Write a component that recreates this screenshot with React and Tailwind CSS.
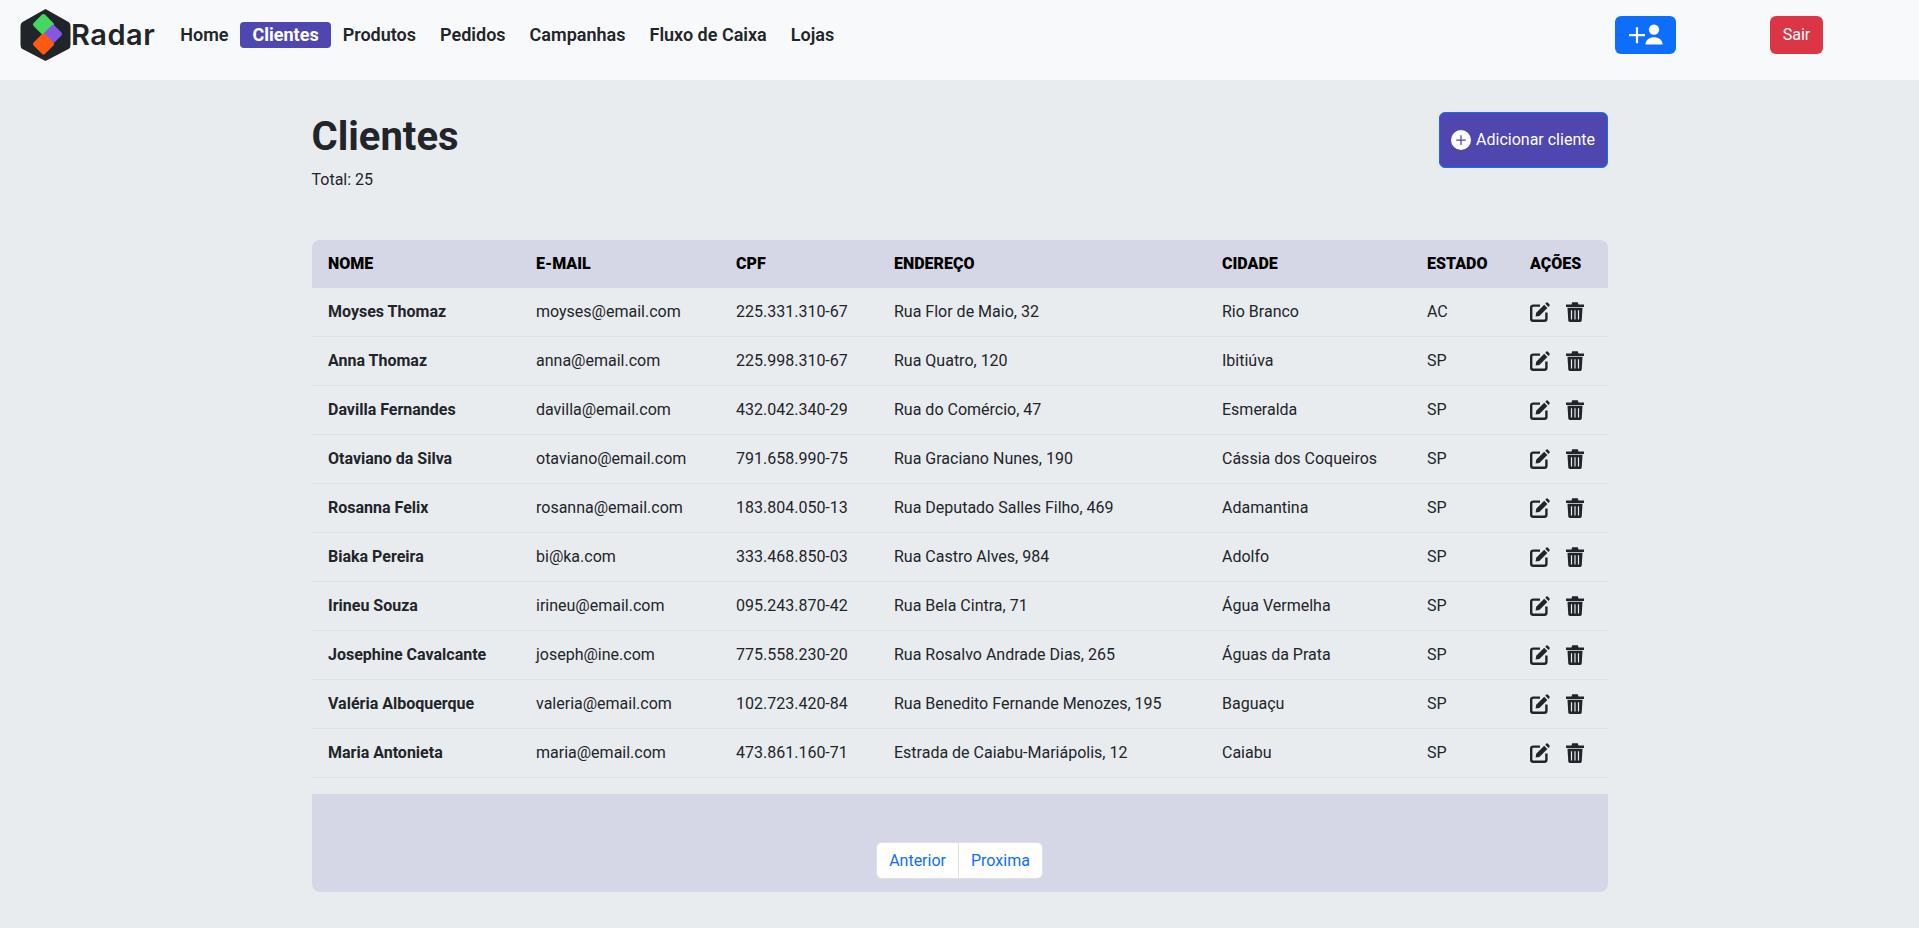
import React from "react";
import { BsPlusCircleFill } from "react-icons/bs";

const links = ["Home", "Clientes", "Produtos", "Pedidos", "Campanhas", "Fluxo de Caixa", "Lojas"];

const columns = ["Nome", "E-mail", "CPF", "Endereço", "Cidade", "Estado", "Ações"];

const clients = [
  ["Moyses Thomaz", "moyses@email.com", "225.331.310-67", "Rua Flor de Maio, 32", "Rio Branco", "AC"],
  ["Anna Thomaz", "anna@email.com", "225.998.310-67", "Rua Quatro, 120", "Ibitiúva", "SP"],
  ["Davilla Fernandes", "davilla@email.com", "432.042.340-29", "Rua do Comércio, 47", "Esmeralda", "SP"],
  ["Otaviano da Silva", "otaviano@email.com", "791.658.990-75", "Rua Graciano Nunes, 190", "Cássia dos Coqueiros", "SP"],
  ["Rosanna Felix", "rosanna@email.com", "183.804.050-13", "Rua Deputado Salles Filho, 469", "Adamantina", "SP"],
  ["Biaka Pereira", "bi@ka.com", "333.468.850-03", "Rua Castro Alves, 984", "Adolfo", "SP"],
  ["Irineu Souza", "irineu@email.com", "095.243.870-42", "Rua Bela Cintra, 71", "Água Vermelha", "SP"],
  ["Josephine Cavalcante", "joseph@ine.com", "775.558.230-20", "Rua Rosalvo Andrade Dias, 265", "Águas da Prata", "SP"],
  ["Valéria Alboquerque", "valeria@email.com", "102.723.420-84", "Rua Benedito Fernande Menozes, 195", "Baguaçu", "SP"],
  ["Maria Antonieta", "maria@email.com", "473.861.160-71", "Estrada de Caiabu-Mariápolis, 12", "Caiabu", "SP"],
];

// Hexagon logo with the three rounded squares
function Logo() {
  return (
    <svg viewBox="0 0 50 54" className="h-[54px] w-[51px] shrink-0">
      <path d="M25 1 L48 14 Q50 15 50 18 L50 37 Q50 40 48 41 L25 53 L2 41 Q0 40 0 37 L0 18 Q0 15 2 14 Z" fill="#212529" />
      <rect x="15" y="8.5" width="16" height="16" rx="2" fill="#44d860" transform="rotate(45 23 16.5)" />
      <rect x="25.5" y="19" width="14" height="14" rx="2" fill="#8458e0" transform="rotate(45 32.5 26)" />
      <rect x="15" y="28" width="16" height="16" rx="2" fill="#ff5a12" transform="rotate(45 23 36)" />
    </svg>
  );
}

function PersonAdd() {
  return (
    <svg viewBox="0 0 36 24" className="h-6 w-9" fill="white">
      <path d="M1 12.2H17M9 4.2V20.2" stroke="white" strokeWidth="2.2" fill="none" />
      <circle cx="26" cy="6.6" r="5.2" />
      <path d="M17.5 21.5 C17.5 16.5 22 14.2 26 14.2 C30 14.2 34.6 16.5 34.6 21.5 Z" />
    </svg>
  );
}

function EditIcon() {
  return (
    <svg viewBox="0 0 20 20" className="h-5 w-5 shrink-0" fill="#212529">
      <path d="M10 3.6H3.2Q1.2 3.6 1.2 5.6V16.8Q1.2 18.8 3.2 18.8H14.4Q16.4 18.8 16.4 16.8V10.5" fill="none" stroke="#212529" strokeWidth="2.4" />
      <path d="M6.2 10.8 L14.2 2.8 L17.4 6 L9.4 14 L5.6 14.6 Z" />
      <path d="M15.3 1.7 L16.4 0.6 Q17 0 17.7 0.6 L19.6 2.5 Q20 3.2 19.5 3.8 L18.5 4.9 Z" />
    </svg>
  );
}

function TrashIcon() {
  return (
    <svg viewBox="0 0 18 20" className="h-5 w-[18px] shrink-0">
      <path d="M0 2.6H18V5H0Z M5.5 2.6 L6.2 0.2 H11.8 L12.5 2.6Z" fill="#212529" />
      <path d="M1.5 5.8 L2.3 18.6 Q2.4 20 3.8 20 H14.2 Q15.6 20 15.7 18.6 L16.5 5.8 Z" fill="#212529" />
      <path d="M5.5 8.2V17.6M9 8.2V17.6M12.5 8.2V17.6" stroke="#e9ecef" strokeWidth="1.2" />
    </svg>
  );
}

export default function App() {
  return (
    <div className="min-h-[928px] bg-[#e9ecef] font-['Roboto',sans-serif] text-[#212529]">
      {/* Top bar */}
      <nav className="flex h-20 items-center bg-[#f8f9fa] pb-[10px] pl-5">
        <Logo />
        <span className="font-['Inter',sans-serif] text-[29px] font-semibold tracking-[0.5px]">Radar</span>
        <ul className="ml-[13px] flex items-center">
          {links.map((link) =>
            link === "Clientes" ? (
              <li key={link} className="rounded bg-[#4f46b0] px-3 text-lg leading-[26px] font-bold text-white">
                {link}
              </li>
            ) : (
              <li key={link} className="px-3 text-lg leading-[26px] font-semibold">
                {link}
              </li>
            )
          )}
        </ul>
        <button className="ml-auto flex h-[38px] w-[61px] items-center justify-center rounded-md bg-[#0d6efd]">
          <PersonAdd />
        </button>
        <button className="mr-[96px] ml-[94px] h-[38px] w-[53px] rounded-md bg-[#dc3545] text-base text-white">Sair</button>
      </nav>

      <main className="mx-auto w-[1296px] pt-8">
        <div className="flex items-start justify-between">
          <div>
            <h1 className="mt-px text-[40px] leading-[48px] font-bold">Clientes</h1>
            <p className="mt-[7px] text-base leading-6">Total: 25</p>
          </div>
          <button className="flex h-14 w-[169px] items-center justify-center gap-[5px] rounded-md border border-[#0d6efd] bg-[#4f46b0] text-base text-white">
            <BsPlusCircleFill className="h-5 w-5" />
            Adicionar cliente
          </button>
        </div>

        <table className="mt-[48px] w-full table-fixed border-separate border-spacing-0 text-left text-base">
          <colgroup>
            <col className="w-[208px]" />
            <col className="w-[200px]" />
            <col className="w-[158px]" />
            <col className="w-[328px]" />
            <col className="w-[205px]" />
            <col className="w-[103px]" />
            <col className="w-[94px]" />
          </colgroup>
          <thead className="text-black">
            <tr className="h-12">
              {columns.map((col, i) => (
                <th
                  key={col}
                  className={`bg-[#d6d7e6] pr-4 pl-[16.5px] font-black uppercase ${i === 0 ? "rounded-tl-lg" : ""} ${i === columns.length - 1 ? "rounded-tr-lg" : ""}`}
                >
                  {col}
                </th>
              ))}
            </tr>
          </thead>
          <tbody>
            {clients.map((row) => (
              <tr key={row[0]} className="h-[49px]">
                <td className="border-b border-[#dee2e6] pr-4 pl-[16.5px] font-bold">{row[0]}</td>
                {row.slice(1).map((cell) => (
                  <td key={cell} className="border-b border-[#dee2e6] pr-4 pl-[16.5px]">
                    {cell}
                  </td>
                ))}
                <td className="border-b border-[#dee2e6] pr-4 pl-[16.5px]">
                  <div className="-mt-px flex items-center gap-4">
                    <EditIcon />
                    <TrashIcon />
                  </div>
                </td>
              </tr>
            ))}
          </tbody>
        </table>

        <div className="mt-4 flex h-[98px] items-end justify-center rounded-b-lg bg-[#d6d7e6] pb-[13px]">
          <div className="flex h-[37px] rounded-md border border-[#dee2e6] bg-white text-base text-[#0d6efd]">
            <span className="border-r border-[#dee2e6] px-3 leading-[35px]">Anterior</span>
            <span className="px-3 leading-[35px]">Proxima</span>
          </div>
        </div>
      </main>
    </div>
  );
}
